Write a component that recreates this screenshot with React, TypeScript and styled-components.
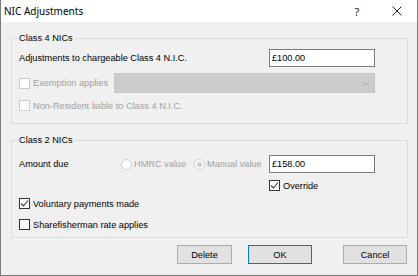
import styled, { createGlobalStyle } from 'styled-components';

const GlobalStyle = createGlobalStyle`
  html, body {
    margin: 0;
    padding: 0;
    background: #ffffff;
  }
  body {
    font-family: "Liberation Sans", Arial, sans-serif;
    font-size: 9.2px;
    color: #000000;
  }
`;

const Window = styled.div`
  width: 418px;
  height: 276px;
  box-sizing: border-box;
  border: 1px solid #7a7a7a;
  border-top: none;
  background: #f0f0f0;
  display: flex;
  flex-direction: column;
`;

const TitleBar = styled.div`
  height: 22px;
  background: #ffffff;
  display: flex;
  align-items: center;
  padding-left: 3px;
`;

const Title = styled.div`
  flex: 1;
  font-family: "Noto Sans", "Open Sans", sans-serif;
  font-size: 10px;
  color: #000000;
`;

const CaptionButton = styled.div`
  width: 40px;
  height: 22px;
  display: flex;
  align-items: center;
  justify-content: center;
  font-family: "Noto Sans", sans-serif;
  font-size: 11px;
  color: #222222;
`;

const Body = styled.div`
  flex: 1;
  padding: 16px 9px 0 10px;
  display: flex;
  flex-direction: column;
`;

const GroupBox = styled.div<{ $top?: number; $pt: number; $pb: number }>`
  position: relative;
  border: 1px solid #dcdcdc;
  margin-top: ${(p) => p.$top ?? 0}px;
  padding: ${(p) => p.$pt}px 32px ${(p) => p.$pb}px 7px;
  display: flex;
  flex-direction: column;
`;

const Caption = styled.span`
  position: absolute;
  top: -7px;
  left: 5px;
  padding: 0 2px;
  line-height: 12px;
  background: #f0f0f0;
`;

const Row = styled.div<{ $h: number; $gap?: number }>`
  height: ${(p) => p.$h}px;
  margin-top: ${(p) => p.$gap ?? 0}px;
  display: flex;
  align-items: center;
`;

const Label = styled.span<{ $w?: number; $disabled?: boolean }>`
  ${(p) => (p.$w ? `width: ${p.$w}px; flex: none;` : 'flex: 1;')}
  color: ${(p) => (p.$disabled ? '#a0a0a0' : '#000000')};
  white-space: nowrap;
`;

const TextBox = styled.input`
  width: 106px;
  height: 18px;
  box-sizing: border-box;
  margin: 0 0 0 auto;
  padding: 0 2px;
  border: 1px solid #7a7a7a;
  background: #ffffff;
  font-family: inherit;
  font-size: 9.2px;
  color: #000000;
  outline: none;
`;

const Combo = styled.div`
  flex: 1;
  height: 20px;
  box-sizing: border-box;
  margin-left: 6px;
  background: #cccccc;
  border: 1px solid #c4c4c4;
  display: flex;
  align-items: center;
  justify-content: flex-end;
  padding-right: 4px;
`;

const CheckLabel = styled.label<{ $disabled?: boolean; $push?: boolean }>`
  display: flex;
  align-items: center;
  gap: 3px;
  color: ${(p) => (p.$disabled ? '#a0a0a0' : '#000000')};
  white-space: nowrap;
  ${(p) => (p.$push ? 'margin-left: auto; width: 106px;' : '')}
`;

const Box = styled.span<{ $disabled?: boolean }>`
  width: 11px;
  height: 11px;
  box-sizing: border-box;
  border: 1px solid ${(p) => (p.$disabled ? '#cccccc' : '#333333')};
  background: #ffffff;
  display: flex;
  align-items: center;
  justify-content: center;
  flex: none;
`;

const RadioGroup = styled.div`
  display: flex;
  align-items: center;
  gap: 8px;
`;

const RadioOption = styled.span`
  display: flex;
  align-items: center;
  gap: 2px;
  color: #a0a0a0;
  white-space: nowrap;
`;

const RadioCircle = styled.span<{ $checked?: boolean }>`
  width: 11px;
  height: 11px;
  box-sizing: border-box;
  border: 1px solid #cccccc;
  border-radius: 50%;
  background: #ffffff;
  display: flex;
  align-items: center;
  justify-content: center;
  &::after {
    content: '';
    display: ${(p) => (p.$checked ? 'block' : 'none')};
    width: 5px;
    height: 5px;
    border-radius: 50%;
    background: #cccccc;
  }
`;

const ButtonRow = styled.div`
  margin-top: 7px;
  padding-right: 1px;
  display: flex;
  justify-content: flex-end;
`;

const Button = styled.button<{ $w: number; $gap?: number; $default?: boolean }>`
  width: ${(p) => p.$w}px;
  height: 19px;
  margin: 0 0 0 ${(p) => p.$gap ?? 0}px;
  padding: 0;
  box-sizing: border-box;
  background: #e1e1e1;
  border: 1px solid ${(p) => (p.$default ? '#0078d7' : '#adadad')};
  font-family: inherit;
  font-size: 9.2px;
  color: #000000;
`;

const Check = ({ checked, disabled, children, push }: {
  checked?: boolean;
  disabled?: boolean;
  push?: boolean;
  children: string;
}) => (
  <CheckLabel $disabled={disabled} $push={push}>
    <Box $disabled={disabled}>
      {checked && (
        <svg width="9" height="9" viewBox="0 0 9 9">
          <polyline points="1,4.5 3.5,7 8,1.5" fill="none" stroke="#333333" strokeWidth="1.1" />
        </svg>
      )}
    </Box>
    {children}
  </CheckLabel>
);

export default function App() {
  return (
    <>
      <GlobalStyle />
      <Window>
        <TitleBar>
          <Title>NIC Adjustments</Title>
          <CaptionButton>?</CaptionButton>
          <CaptionButton>
            <svg width="10" height="10" viewBox="0 0 10 10">
              <path d="M0.5 0.5 L9.5 9.5 M9.5 0.5 L0.5 9.5" stroke="#222222" strokeWidth="1" />
            </svg>
          </CaptionButton>
        </TitleBar>
        <Body>
          <GroupBox $pt={10} $pb={11}>
            <Caption>Class 4 NICs</Caption>
            <Row $h={18}>
              <Label>Adjustments to chargeable Class 4 N.I.C.</Label>
              <TextBox readOnly value="£100.00" />
            </Row>
            <Row $h={20} $gap={6}>
              <Check disabled>Exemption applies</Check>
              <Combo>
                <svg width="8" height="5" viewBox="0 0 8 5">
                  <polyline points="0.5,0.5 4,4 7.5,0.5" fill="none" stroke="#a6a6a6" strokeWidth="1" />
                </svg>
              </Combo>
            </Row>
            <Row $h={13} $gap={6}>
              <Check disabled>Non-Resident liable to Class 4 N.I.C.</Check>
            </Row>
          </GroupBox>
          <GroupBox $top={16} $pt={14} $pb={6}>
            <Caption>Class 2 NICs</Caption>
            <Row $h={18}>
              <Label $w={102}>Amount due</Label>
              <RadioGroup>
                <RadioOption>
                  <RadioCircle />
                  HMRC value
                </RadioOption>
                <RadioOption>
                  <RadioCircle $checked />
                  Manual value
                </RadioOption>
              </RadioGroup>
              <TextBox readOnly value="£158.00" />
            </Row>
            <Row $h={13} $gap={6}>
              <Check checked push>Override</Check>
            </Row>
            <Row $h={13} $gap={5}>
              <Check checked>Voluntary payments made</Check>
            </Row>
            <Row $h={13} $gap={8}>
              <Check>Sharefisherman rate applies</Check>
            </Row>
          </GroupBox>
          <ButtonRow>
            <Button $w={55}>Delete</Button>
            <Button $w={64} $gap={16} $default>OK</Button>
            <Button $w={64} $gap={31}>Cancel</Button>
          </ButtonRow>
        </Body>
      </Window>
    </>
  );
}
